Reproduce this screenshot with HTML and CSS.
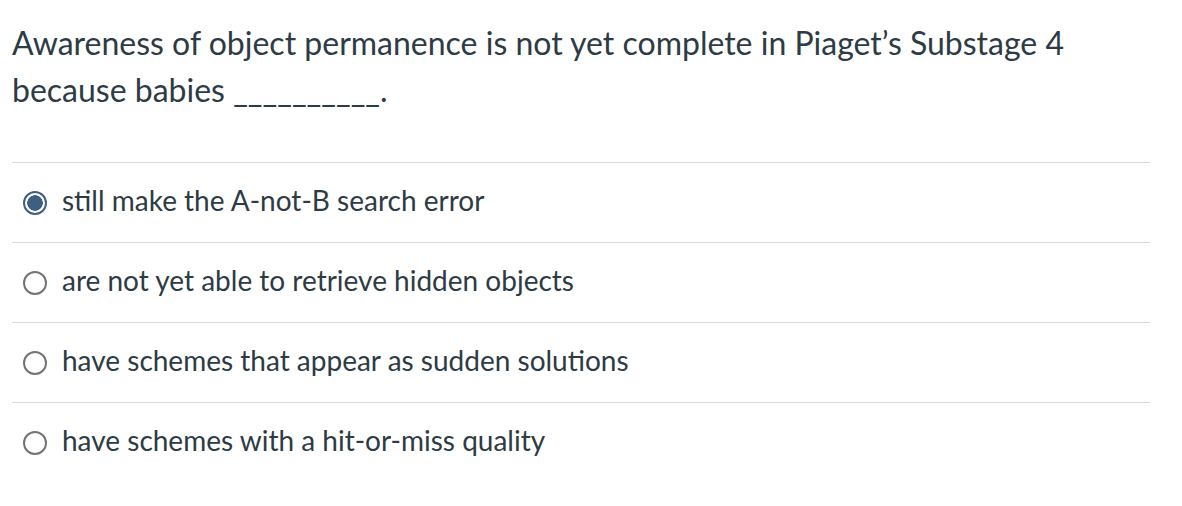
FILE: index.html
```html
<!DOCTYPE html>
<html>
<head>
<meta charset="utf-8">
<link rel="stylesheet" href="styles.css">
</head>
<body>
<div class="quiz">
  <p class="question">Awareness of object permanence is not yet complete in Piaget’s Substage 4 because babies __________.</p>
  <ul class="answers">
    <li class="answer"><span class="radio checked"></span><span class="label">still make the A-not-B search error</span></li>
    <li class="answer"><span class="radio"></span><span class="label">are not yet able to retrieve hidden objects</span></li>
    <li class="answer"><span class="radio"></span><span class="label">have schemes that appear as sudden solutions</span></li>
    <li class="answer"><span class="radio"></span><span class="label">have schemes with a hit-or-miss quality</span></li>
  </ul>
</div>
</body>
</html>
```
FILE: styles.css
```css
html, body {
  margin: 0;
  padding: 0;
  background: #ffffff;
}
body {
  font-family: Lato, "Open Sans", sans-serif;
  color: #2d3b45;
}
.quiz {
  padding: 19px 32px 0 12px;
  width: 1138px;
}
.question {
  margin: 0 0 49px 0;
  font-size: 32px;
  line-height: 47px;
  width: 1100px;
}
.answers {
  list-style: none;
  margin: 0;
  padding: 0;
}
.answer {
  display: flex;
  align-items: center;
  border-top: 1px solid #dadada;
  padding: 19px 0 24px 0;
}
.radio {
  box-sizing: border-box;
  width: 24px;
  height: 24px;
  border-radius: 50%;
  border: 2px solid #737373;
  margin: 6px 15px 0 11px;
  flex: none;
  background: #fff;
}
.radio.checked {
  border-color: #3f5f80;
  background: radial-gradient(circle, #3f5f80 0 7.5px, #fff 8px);
}
.label {
  font-size: 28px;
  line-height: 36px;
}
```
